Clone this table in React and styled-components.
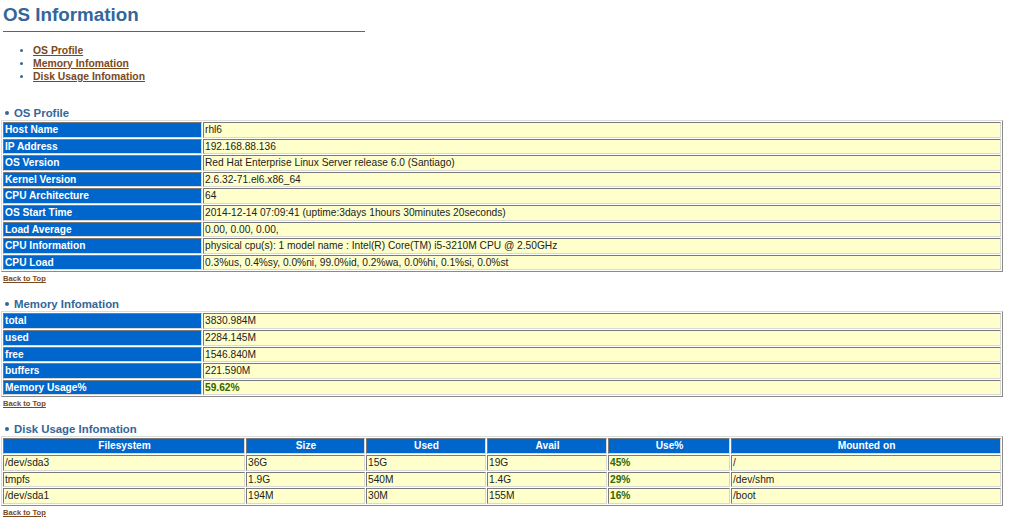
import React from 'react';
import styled, { createGlobalStyle } from 'styled-components';

const GlobalStyle = createGlobalStyle`
  body {
    margin: 0;
    padding: 0 1px;
    background: #ffffff;
    font-family: "Liberation Sans", Arial, sans-serif;
  }
`;

const Page = styled.div`
  width: 1020px;
`;

const Title = styled.h1`
  margin: 0;
  padding: 3px 0 0 2px;
  font-size: 18.8px;
  line-height: 23px;
  font-weight: bold;
  color: #336699;
`;

const Rule = styled.div`
  width: 362px;
  height: 1px;
  margin: 5px 0 0 2px;
  background: #5a6470;
`;

const TocList = styled.ul`
  margin: 12px 0 0 0;
  padding-left: 32px;
  list-style: disc;
  color: #336699;
  font-size: 10.4px;
  line-height: 13px;
`;

const TocLink = styled.a`
  color: #7a4a1c;
  font-weight: bold;
  text-decoration: underline;
`;

const SectionHead = styled.div`
  display: flex;
  align-items: center;
  gap: 5px;
  margin-top: ${(p) => p.$gap}px;
  padding-left: 4px;
  font-size: 11.4px;
  line-height: 14px;
  font-weight: bold;
  color: #336699;
`;

const Bullet = styled.span`
  width: 4px;
  height: 4px;
  border-radius: 50%;
  background: #336699;
`;

const Table = styled.table`
  width: 1002px;
  border-collapse: separate;
  border-spacing: 1px;
  border: 1px solid;
  border-color: #dcdcdc #8a8a8a #8a8a8a #dcdcdc;
  font-size: 10.2px;
  table-layout: fixed;
`;

const Label = styled.td`
  width: ${(p) => p.$w || 'auto'};
  padding: 0 0 0 1px;
  height: 13.6px;
  line-height: 13.6px;
  background: #0066cc;
  color: #ffffff;
  font-weight: bold;
  border: 1px solid;
  border-color: #7a7a7a #d8d8d8 #d8d8d8 #7a7a7a;
  white-space: nowrap;
  overflow: hidden;
`;

const Head = styled(Label).attrs({ as: 'th' })`
  text-align: center;
`;

const Value = styled.td`
  padding: 0 0 0 1px;
  height: 13.6px;
  line-height: 13.6px;
  background: #ffffcc;
  color: ${(p) => (p.$good ? '#336600' : '#222222')};
  font-weight: ${(p) => (p.$good ? 'bold' : 'normal')};
  border: 1px solid;
  border-color: #7a7a7a #d8d8d8 #d8d8d8 #7a7a7a;
  white-space: nowrap;
  overflow: hidden;
`;

const BackTop = styled.a`
  display: block;
  width: max-content;
  margin: 2px 0 0 2px;
  font-size: 7.6px;
  line-height: 10px;
  font-weight: bold;
  color: #7a4a1c;
  text-decoration: underline;
`;

const osProfile = [
  ['Host Name', 'rhl6'],
  ['IP Address', '192.168.88.136'],
  ['OS Version', 'Red Hat Enterprise Linux Server release 6.0 (Santiago)'],
  ['Kernel Version', '2.6.32-71.el6.x86_64'],
  ['CPU Architecture', '64'],
  ['OS Start Time', '2014-12-14 07:09:41 (uptime:3days 1hours 30minutes 20seconds)'],
  ['Load Average', '0.00, 0.00, 0.00,'],
  ['CPU Information', 'physical cpu(s): 1 model name : Intel(R) Core(TM) i5-3210M CPU @ 2.50GHz'],
  ['CPU Load', '0.3%us, 0.4%sy, 0.0%ni, 99.0%id, 0.2%wa, 0.0%hi, 0.1%si, 0.0%st'],
];

const memory = [
  ['total', '3830.984M'],
  ['used', '2284.145M'],
  ['free', '1546.840M'],
  ['buffers', '221.590M'],
  ['Memory Usage%', '59.62%', true],
];

const diskCols = [
  ['Filesystem', '239px'],
  ['Size', '116px'],
  ['Used', '117px'],
  ['Avail', '117px'],
  ['Use%', '119px'],
  ['Mounted on', 'auto'],
];

const disks = [
  ['/dev/sda3', '36G', '15G', '19G', '45%', '/'],
  ['tmpfs', '1.9G', '540M', '1.4G', '29%', '/dev/shm'],
  ['/dev/sda1', '194M', '30M', '155M', '16%', '/boot'],
];

const KeyValueTable = ({ rows }) => (
  <Table>
    <tbody>
      {rows.map(([k, v, good]) => (
        <tr key={k}>
          <Label $w="196px">{k}</Label>
          <Value $good={good}>{v}</Value>
        </tr>
      ))}
    </tbody>
  </Table>
);

const App = () => (
  <Page id="top">
    <GlobalStyle />
    <Title>OS Information</Title>
    <Rule />
    <TocList>
      <li><TocLink href="#os">OS Profile</TocLink></li>
      <li><TocLink href="#mem">Memory Infomation</TocLink></li>
      <li><TocLink href="#disk">Disk Usage Infomation</TocLink></li>
    </TocList>

    <SectionHead id="os" $gap={23}><Bullet />OS Profile</SectionHead>
    <KeyValueTable rows={osProfile} />
    <BackTop href="#top">Back to Top</BackTop>

    <SectionHead id="mem" $gap={13}><Bullet />Memory Infomation</SectionHead>
    <KeyValueTable rows={memory} />
    <BackTop href="#top">Back to Top</BackTop>

    <SectionHead id="disk" $gap={13}><Bullet />Disk Usage Infomation</SectionHead>
    <Table>
      <thead>
        <tr>
          {diskCols.map(([c, w]) => (
            <Head key={c} $w={w}>{c}</Head>
          ))}
        </tr>
      </thead>
      <tbody>
        {disks.map((d) => (
          <tr key={d[0]}>
            {d.map((cell, i) => (
              <Value key={i} $good={i === 4}>{cell}</Value>
            ))}
          </tr>
        ))}
      </tbody>
    </Table>
    <BackTop href="#top">Back to Top</BackTop>
  </Page>
);

export default App;
